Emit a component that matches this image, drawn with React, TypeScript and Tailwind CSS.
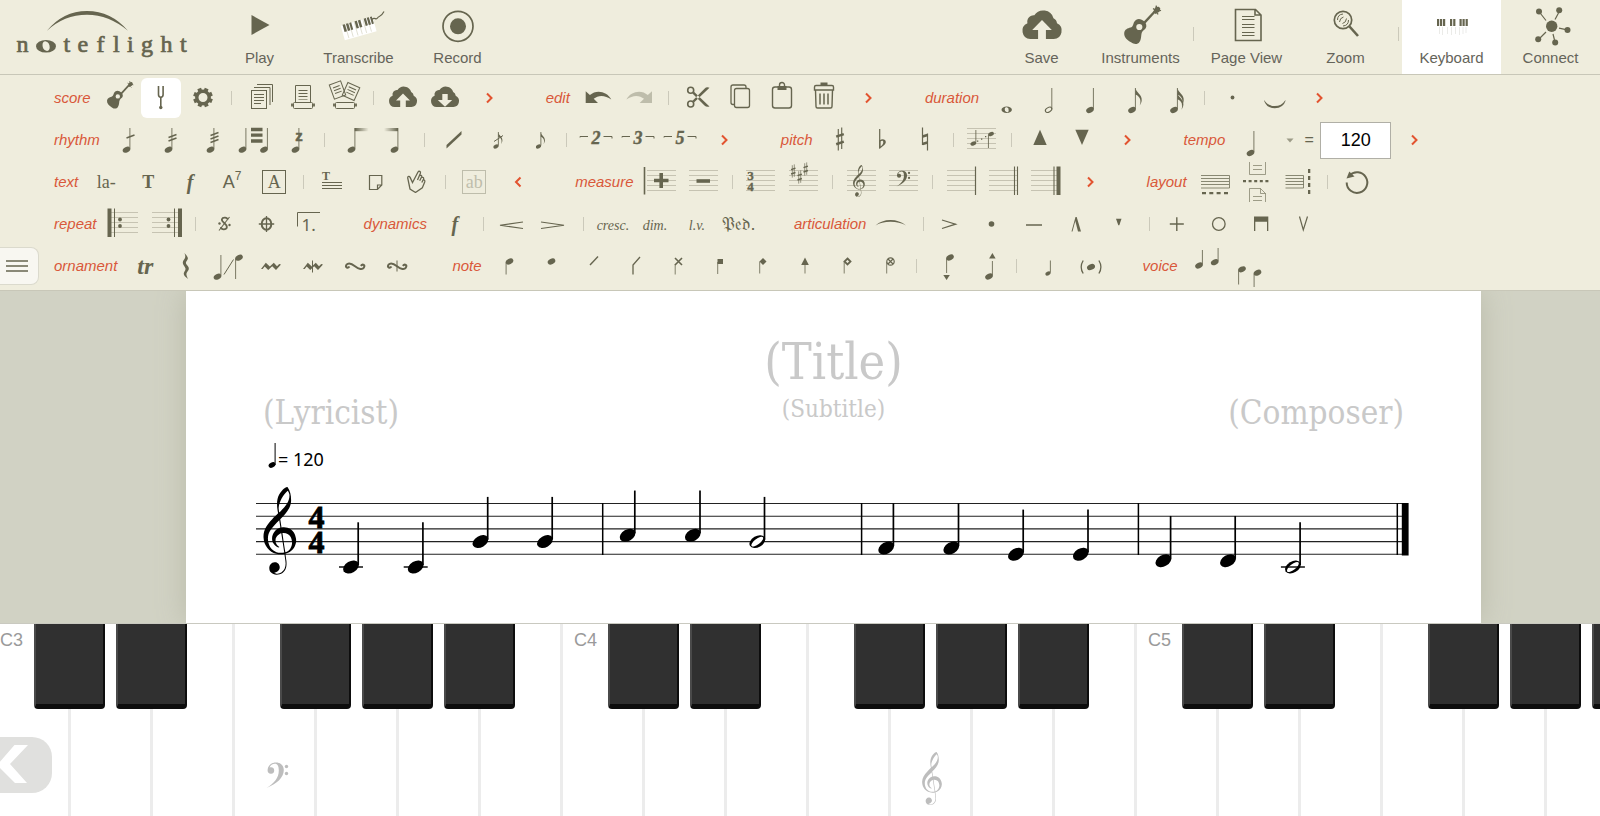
import type { ReactNode } from 'react'

type Tool = { name: string; icon: ReactNode; active?: boolean; disabled?: boolean }
type Item = Tool | 'sep'
type GroupData = { label: string; items: Item[]; more?: 'right' | 'left' }

const TREBLE =
  'm12.049 3.5296c0.305 3.1263-2.019 5.6563-4.0772 7.7014-0.9349 0.897-0.155 0.148-0.6437 0.594-0.1022-0.479-0.2986-1.731-0.2802-2.11 0.1304-2.6939 2.3198-6.5875 4.2381-8.0236 0.309 0.5767 0.563 0.6231 0.763 1.8382zm0.651 16.142c-1.232-0.906-2.85-1.144-4.3336-0.885-0.1913-1.255-0.3827-2.51-0.574-3.764 2.3506-2.329 4.9066-5.0322 5.0406-8.5394 0.059-2.232-0.276-4.6714-1.678-6.4836-1.7004 0.12823-2.8995 2.156-3.8019 3.4165-1.4889 2.6705-1.1414 5.9169-0.57 8.7965-0.8094 0.952-1.9296 1.743-2.7274 2.734-2.3561 2.308-4.4085 5.43-4.0046 8.878 0.18332 3.334 2.5894 6.434 5.8702 7.227 1.2457 0.315 2.5639 0.346 3.8241 0.099 0.2199 2.25 1.0266 4.629 0.0925 6.813-0.7007 1.598-2.7875 3.004-4.3325 2.192-0.5994-0.316-0.1137-0.051-0.478-0.252 1.0698-0.257 1.9996-1.036 2.26-1.565 0.8378-1.464-0.3998-3.639-2.1554-3.358-2.262 0.046-3.1904 3.14-1.7356 4.685 1.3468 1.52 3.833 1.312 5.4301 0.318 1.8125-1.18 2.0395-3.544 1.8325-5.562-0.07-0.678-0.403-2.67-0.444-3.387 0.697-0.249 0.209-0.059 1.193-0.449 2.66-1.053 4.357-4.259 3.594-7.122-0.318-1.469-1.044-2.914-2.302-3.792zm0.561 5.757c0.214 1.991-1.053 4.321-3.079 4.96-0.136-0.795-0.172-1.011-0.2626-1.475-0.4822-2.46-0.744-4.987-1.116-7.481 1.6246-0.168 3.4576 0.543 4.0226 2.184 0.244 0.577 0.343 1.197 0.435 1.812zm-5.1486 5.196c-2.5441 0.141-4.9995-1.595-5.6343-4.081-0.749-2.153-0.5283-4.63 0.8207-6.504 1.1151-1.702 2.6065-3.105 4.0286-4.543 0.183 1.127 0.366 2.254 0.549 3.382-2.9906 0.782-5.0046 4.725-3.215 7.451 0.5324 0.764 1.9765 2.223 2.7655 1.634-1.102-0.683-2.0033-1.859-1.8095-3.227-0.0821-1.282 1.3699-2.911 2.6513-3.198 0.4384 2.869 0.9413 6.073 1.3797 8.943-0.5054 0.1-1.0211 0.143-1.536 0.143z'
const BASS =
  'M1.6 8.6C1.6 3.6 5.2.4 10 .4c4.9 0 7.8 3.2 7.8 7.7C17.800 16 10.500 22 .6 26 8.200 21 12.800 16 12.800 8.400 12.800 4 11.600 1.700 8.900 1.700 6.600 1.700 4.200 3 3.600 5.600 6 4.800 8.200 6 8.200 8.300a3.300 3.300 0 0 1-6.600.3z'

const serif = '"Liberation Serif", "Times New Roman", serif'
const sans = '"Liberation Sans", Arial, sans-serif'

/* Drawing helpers. Every tool icon uses a 42 x 42 grid. */
function Ico({ children, box = '0 0 42 42' }: { children: ReactNode; box?: string }) {
  return (
    <svg viewBox={box} className="size-[42px] shrink-0 overflow-visible" fill="currentColor" aria-hidden="true">
      {children}
    </svg>
  )
}

function Lines({ d, w = 1, o = 1, cap }: { d: string; w?: number; o?: number; cap?: 'round' }) {
  return <path d={d} fill="none" stroke="currentColor" strokeWidth={w} opacity={o} strokeLinecap={cap} />
}

function Head({ x, y, r = 4 }: { x: number; y: number; r?: number }) {
  return <ellipse cx={x} cy={y} rx={r} ry={r * 0.68} transform={`rotate(-25 ${x} ${y})`} />
}

function Up({ x, y, top, r = 4 }: { x: number; y: number; top: number; r?: number }) {
  return (
    <>
      <Head x={x} y={y} r={r} />
      <Lines d={`M${x + r * 0.85} ${y - 1}V${top}`} o={0.85} />
    </>
  )
}

function Down({ x, y, bottom, r = 4 }: { x: number; y: number; bottom: number; r?: number }) {
  return (
    <>
      <Head x={x} y={y} r={r} />
      <Lines d={`M${x - r * 0.85} ${y + 1}V${bottom}`} o={0.85} />
    </>
  )
}

function Staff({ x1 = 7, x2 = 36 }: { x1?: number; x2?: number }) {
  return <Lines d={[9.5, 14.5, 19.5, 24.5, 29.5].map((y) => `M${x1} ${y}H${x2}`).join('')} o={0.3} />
}

function Sharp({ x, y, s = 1 }: { x: number; y: number; s?: number }) {
  return (
    <g transform={`translate(${x} ${y}) scale(${s})`}>
      <Lines d="M-1.800-10.500V12M1.800-12V10.500" w={1.2} />
      <Lines d="M-4-2.500L4-5.200M-4 5.500L4 2.800" w={2.6} />
    </g>
  )
}

function Guitar() {
  return (
    <>
      <path
        fillRule="evenodd"
        d="M9 23.800c.3-2.700 2.500-3.500 4.500-4 2-.6 1.800-2.500 2.600-4 1.300-2.200 3.600-2.600 5.400-1.500 2.200 1.200 3.600 2.800 3.300 4.800-.3 1.900-2 2.400-2.900 3.700-1.200 1.800-.2 4.800-2 7.300-1.300 1.900-3.700 2-6 .3-2.800-1.500-5.100-3.600-4.900-6.600zM17.600 19.400a2.200 2.200 0 1 0 4.400 0 2.200 2.200 0 1 0-4.400 0z"
      />
      <Lines d="M23 16.800L31 8.200" w={1.7} />
      <path d="M29.800 8.600l1.400-3.200 2.600-.4 1 1.200-.6 2.400-3 1.500z" />
      <Lines d="M29.600 6.200l1.400 1M31.600 4.200l.8 1.400M35.300 7.800l-1.400-.5M33.300 10.400l-1-1" w={0.9} />
    </>
  )
}

const CLOUD =
  'M12.600 30a5.900 5.900 0 0 1-2-11.300 4.500 4.500 0 0 1 4.900-5.600 7.600 7.600 0 0 1 13.700 2 4.400 4.400 0 0 1 2.500 3.700A5.900 5.900 0 0 1 29.400 30z'

function Roller() {
  return (
    <>
      <rect x="11.500" y="25.500" width="19" height="6" rx="1" fill="none" stroke="currentColor" />
      <Lines d="M10 26.500v3M32 26.500v3" w={1.8} />
    </>
  )
}

function Flag({ x, y, s = 1 }: { x: number; y: number; s?: number }) {
  return (
    <path
      transform={`translate(${x} ${y}) scale(${s})`}
      d="M0 0c.6 4.500 6.800 6.500 6.300 12.200-.1 2-1 3.800-2 5.300C6 13 5 8.500 0 6.500z"
    />
  )
}

function Tuplet({ n }: { n: string }) {
  return (
    <Ico>
      <Lines d="M5 18.500v-1h8M28.500 17.500H37v2" />
      <text x="21" y="24.500" textAnchor="middle" fontFamily={serif} fontSize="18" fontWeight="700" fontStyle="italic" stroke="currentColor" strokeWidth=".4">
        {n}
      </text>
    </Ico>
  )
}

const word = (text: string, cls: string) => <span className={cls}>{text}</span>
const SERIF = 'font-[Liberation_Serif,serif]'

const groups: GroupData[][] = [
  [
    {
      label: 'score',
      more: 'right',
      items: [
        { name: 'Instruments', icon: <Ico><Guitar /></Ico> },
        {
          name: 'Concert pitch',
          active: true,
          icon: (
            <Ico>
              <Lines d="M18.500 9v8.500q0 2.500 2.300 2.800 2.300-.3 2.300-2.800V9" w={1.6} />
              <Lines d="M20.800 20v9" w={1.6} />
              <circle cx="20.800" cy="30.500" r="1.700" />
            </Ico>
          ),
        },
        {
          name: 'Settings',
          icon: (
            <Ico>
              <circle cx="21" cy="20.500" r="6.200" fill="none" stroke="currentColor" strokeWidth="3.400" />
              {[0, 45, 90, 135, 180, 225, 270, 315].map((a) => (
                <rect key={a} x="19" y="10.700" width="4" height="3.500" transform={`rotate(${a + 22} 21 20.500)`} />
              ))}
            </Ico>
          ),
        },
        'sep',
        {
          name: 'Parts',
          icon: (
            <Ico>
              <rect x="11.500" y="13.500" width="15" height="18" fill="none" stroke="currentColor" />
              <Lines d="M14 17.500h10M14 20.500h10M14 23.500h10M14 26.500h7" />
              <Lines d="M14 10.500h16v17.500M17 7.500h15.500V25" />
            </Ico>
          ),
        },
        {
          name: 'Print score',
          icon: (
            <Ico>
              <Lines d="M13.500 25V8.500h15V25M16.500 13.500h9M16.500 16.500h9M16.500 19.500h9" />
              <Lines d="M16.500 22.500h9" o={0.6} />
              <Roller />
            </Ico>
          ),
        },
        {
          name: 'Print parts',
          icon: (
            <Ico>
              <g transform="rotate(-20 13.500 13)">
                <Lines d="M7.500 5.500h12v15h-12zM10 9.500h7M10 12.500h7M10 15.500h7" />
              </g>
              <g transform="rotate(24 27 14.500)">
                <Lines d="M20.500 7.500h13v14h-13zM23 11h8M23 14h8M23 17h8" />
              </g>
              <Roller />
            </Ico>
          ),
        },
        'sep',
        {
          name: 'Export',
          icon: <Ico><path fillRule="evenodd" d={CLOUD + 'M21 16.500l-7 7h4.200V30h5.600v-6.500H28z'} /></Ico>,
        },
        {
          name: 'Import',
          icon: <Ico><path fillRule="evenodd" d={CLOUD + 'M18.300 17h5.400v6h4.500L21 29.700 13.800 23h4.500z'} /></Ico>,
        },
      ],
    },
    {
      label: 'edit',
      more: 'right',
      items: [
        {
          name: 'Undo',
          icon: <Ico><path d="M8.700 14.300V26H21l-4.300-4.200c4.500-4 11.300-4 17.600.7-4.300-8.200-15-10.300-21.400-4.400z" /></Ico>,
        },
        {
          name: 'Redo',
          disabled: true,
          icon: <Ico><path d="M33 14.300V26H20.700l4.300-4.200c-4.500-4-11.300-4-17.600.7 4.300-8.200 15-10.300 21.400-4.400z" /></Ico>,
        },
        'sep',
        {
          name: 'Cut',
          icon: (
            <Ico>
              <circle cx="13.700" cy="13.300" r="3" fill="none" stroke="currentColor" strokeWidth="1.600" />
              <circle cx="13.700" cy="27" r="3" fill="none" stroke="currentColor" strokeWidth="1.600" />
              <path d="M15.500 16.500l1.500-1.800L32.500 29.500q-3 1-5-1zM15.500 23.800l1.500 1.800L32.500 10.700q-3-1-5 1z" />
            </Ico>
          ),
        },
        {
          name: 'Copy',
          icon: (
            <Ico>
              <rect x="15.500" y="11.500" width="15" height="19" rx="2" fill="none" stroke="currentColor" strokeWidth="1.300" />
              <Lines d="M15 27.500h-1q-2 0-2-2V10q0-2 2-2h11q2 0 2 2v1" w={1.3} />
            </Ico>
          ),
        },
        {
          name: 'Paste',
          icon: (
            <Ico>
              <rect x="11.500" y="10" width="19" height="21" rx="2.500" fill="none" stroke="currentColor" strokeWidth="1.400" />
              <rect x="16.500" y="9" width="9" height="4" />
              <Lines d="M18.500 9.500V8a2.500 2.500 0 0 1 5 0v1.500" w={1.4} />
            </Ico>
          ),
        },
        {
          name: 'Delete',
          icon: (
            <Ico>
              <rect x="17.500" y="5.500" width="7" height="2.500" />
              <Lines d="M11.500 13V10q0-1.500 1.500-1.500h16q1.500 0 1.500 1.500v3zM12.500 13l.5 16.500q0 1.500 1.500 1.500h13q1.500 0 1.500-1.500l.5-16.500" w={1.4} />
              <Lines d="M17 16.500v11M21 16.500v11M25 16.500v11" w={1.5} />
            </Ico>
          ),
        },
      ],
    },
    {
      label: 'duration',
      more: 'right',
      items: [
        {
          name: 'Whole note',
          icon: <Ico><path fillRule="evenodd" d="M15.500 32.700a5.200 3.200 0 1 0 10.400 0 5.200 3.200 0 1 0-10.400 0zM18.700 32a1.800 2.400-20 1 0 4 1.400 1.800 2.400-20 1 0-4-1.400z" /></Ico>,
        },
        {
          name: 'Half note',
          icon: (
            <Ico>
              <ellipse cx="20.600" cy="32.800" rx="3.500" ry="2.200" fill="none" stroke="currentColor" strokeWidth="1.100" transform="rotate(-30 20.600 32.800)" />
              <Lines d="M23.800 32V11" o={0.85} />
            </Ico>
          ),
        },
        { name: 'Quarter note', icon: <Ico><Up x={20} y={33} top={11} /></Ico> },
        { name: 'Eighth note', icon: <Ico><Up x={20} y={33} top={11} /><Flag x={23.400} y={11} /></Ico> },
        {
          name: 'Sixteenth note',
          icon: <Ico><Up x={20} y={33} top={11} /><Flag x={23.400} y={11} /><Flag x={23.400} y={16} s={0.95} /></Ico>,
        },
        'sep',
        { name: 'Dot', icon: <Ico><circle cx="20.500" cy="20.500" r="1.900" /></Ico> },
        { name: 'Tie', icon: <Ico><path d="M10.500 23.500q3.500 5.500 10.300 5.500t10.300-5.500h.6q-2.500 7.700-10.900 7.700T10 23.500z" /></Ico> },
      ],
    },
  ],
  [
    {
      label: 'rhythm',
      more: 'right',
      items: [
        { name: 'Tremolo 1', icon: <Ico><Up x={19.500} y={30.700} top={9} /><Lines d="M19.500 19l8-3" w={1.4} /></Ico> },
        { name: 'Tremolo 2', icon: <Ico><Up x={19.500} y={30.700} top={9} /><Lines d="M19.500 18.500l8-3M19.500 22l8-3" w={1.4} /></Ico> },
        { name: 'Tremolo 3', icon: <Ico><Up x={19.500} y={30.700} top={9} /><Lines d="M19.500 16.500l8-3M19.500 20l8-3M19.500 23.500l8-3" w={1.4} /></Ico> },
        {
          name: 'Two note tremolo',
          icon: <Ico><Up x={9.500} y={30.700} top={9} /><Up x={31} y={30.700} top={9} /><Lines d="M18 10.500h11.500M18 16.200h11.500M18 22h11.500" w={3.3} /></Ico>,
        },
        {
          name: 'Buzz roll',
          icon: (
            <Ico>
              <Up x={20.500} y={30.700} top={9} />
              <text x="24" y="22" textAnchor="middle" fontFamily={sans} fontSize="15" fontWeight="700" stroke="currentColor" strokeWidth=".5">z</text>
            </Ico>
          ),
        },
        'sep',
        {
          name: 'Beam right',
          icon: (
            <Ico>
              <linearGradient id="beamR"><stop offset="0" stopColor="#66654f" /><stop offset="1" stopColor="#66654f" stopOpacity="0" /></linearGradient>
              <Up x={18.500} y={30.700} top={9} />
              <rect x="21.700" y="9" width="14" height="3.200" fill="url(#beamR)" />
            </Ico>
          ),
        },
        {
          name: 'Beam left',
          icon: (
            <Ico>
              <linearGradient id="beamL"><stop offset="0" stopColor="#66654f" stopOpacity="0" /><stop offset="1" stopColor="#66654f" /></linearGradient>
              <Up x={19.500} y={30.700} top={9} />
              <rect x="9" y="9" width="14" height="3.200" fill="url(#beamL)" />
            </Ico>
          ),
        },
        'sep',
        { name: 'Slash', icon: <Ico><path d="M13.500 26L28.500 12v3.500L13.500 29.500z" /></Ico> },
        {
          name: 'Acciaccatura',
          icon: <Ico><Up x={21} y={27.500} top={13} r={2.8} /><Flag x={23.300} y={13.500} s={0.65} /><Lines d="M19 22.500l9-6" /></Ico>,
        },
        { name: 'Appoggiatura', icon: <Ico><Up x={21.500} y={27.500} top={13} r={2.8} /><Flag x={23.800} y={13.500} s={0.65} /></Ico> },
        'sep',
        { name: 'Duplet', icon: <Tuplet n="2" /> },
        { name: 'Triplet', icon: <Tuplet n="3" /> },
        { name: 'Quintuplet', icon: <Tuplet n="5" /> },
      ],
    },
    {
      label: 'pitch',
      more: 'right',
      items: [
        { name: 'Sharp', icon: <Ico><Sharp x={20} y={20} s={0.95} /></Ico> },
        {
          name: 'Flat',
          icon: <Ico><Lines d="M17.700 10v19.500" w={1.2} /><path d="M17.300 29.800V21.500c3-2 6.500-1.300 6.500 1.500 0 2.600-3.500 4.600-6.500 6.800zM18.500 27.500c1.800-1.300 2.800-2.800 2.800-4.300 0-1.800-1.600-1.900-2.800-.8z" fillRule="evenodd" /></Ico>,
        },
        { name: 'Natural', icon: <Ico><Lines d="M18.500 8.500V26M23.500 14.500v17" w={1.2} /><Lines d="M18.500 17.500l5-1.500M18.500 25l5-1.500" w={2.6} /></Ico> },
        'sep',
        {
          name: 'Transpose',
          icon: <Ico><Staff x1={5} x2={34} /><Up x={11.300} y={24.500} top={11} r={3} /><Down x={29} y={15} bottom={29} r={3} /><path d="M15 21.500h1.300v1.300H15zM19 19.500h1.300v1.300H19zM23 17h1.300v1.300H23z" /></Ico>,
        },
        'sep',
        { name: 'Pitch up', icon: <Ico><path d="M20 10.700L26.700 26H13.300z" /></Ico> },
        { name: 'Pitch down', icon: <Ico><path d="M20 26l6.700-15.300H13.300z" /></Ico> },
      ],
    },
  ],
  [
    {
      label: 'text',
      more: 'left',
      items: [
        { name: 'Lyrics', icon: word('la-', `${SERIF} text-lg`) },
        { name: 'Text', icon: word('T', `${SERIF} text-lg font-bold`) },
        { name: 'Dynamic text', icon: word('f', `${SERIF} text-xl font-bold italic`) },
        {
          name: 'Chord symbol',
          icon: <span className="flex text-lg">A<sup className="-top-1 text-xs leading-6">7</sup></span>,
        },
        { name: 'Rehearsal mark', icon: word('A', `${SERIF} flex size-6 items-center justify-center border border-current text-lg leading-none`) },
        'sep',
        {
          name: 'Staff text',
          icon: (
            <Ico>
              <text x="11" y="19" fontFamily={serif} fontSize="12" fontWeight="700">T</text>
              <Lines d="M11 21.500h20M11 24.500h20M11 27.500h20" />
            </Ico>
          ),
        },
        { name: 'Comment', icon: <Ico><Lines d="M16.500 14.500h12.300v9.500l-4.300 4.500h-8zM28.500 24h-4v4.500" w={1.2} /></Ico> },
        {
          name: 'Fingering',
          icon: (
            <Ico>
              <Lines
                d="M20.500 31.500l-5.500-3.500-2.300-11c-.2-1.800 1.800-2.200 2.400-.6l2.400 5.100L23 11c.9-1.400 3-.5 2.400 1.200L22.500 19M24.500 14.800c1-1.200 2.600-.3 2.200 1l-2 4M26.700 16.500c1.200-.6 2.300.3 1.900 1.600l-1.800 3.400M28.500 19c1.200-.2 1.600.8 1.200 1.900l-2.400 6-6.800 4.600"
                w={1.3}
              />
            </Ico>
          ),
        },
        'sep',
        { name: 'Edit text', disabled: true, icon: word('ab', `${SERIF} flex size-6 items-center justify-center border border-current text-lg leading-none`) },
      ],
    },
    {
      label: 'measure',
      more: 'right',
      items: [
        { name: 'Add measure', icon: <Ico><Staff x1={6} x2={35} /><Lines d="M3.500 6v27.500" w={1.6} /><Lines d="M13 19.500h14.500M20.200 12v15" w={3.6} /></Ico> },
        { name: 'Remove measure', icon: <Ico><Staff x1={6} x2={35} /><Lines d="M13.500 20H27" w={3.6} /></Ico> },
        'sep',
        {
          name: 'Time signature',
          icon: (
            <Ico>
              <Staff x1={5} x2={34} />
              <g fontFamily={serif} fontSize="13" fontWeight="700" textAnchor="middle" stroke="currentColor" strokeWidth=".3">
                <text x="9.500" y="18.500">3</text>
                <text x="9.500" y="29.500">4</text>
              </g>
            </Ico>
          ),
        },
        { name: 'Key signature', icon: <Ico><Staff x1={6} x2={35} /><Sharp x={10.300} y={10} s={0.55} /><Sharp x={16.700} y={16} s={0.55} /><Sharp x={22.700} y={8} s={0.55} /></Ico> },
        'sep',
        { name: 'Treble clef', icon: <Ico><Staff x1={6} x2={35} /><path d={TREBLE} transform="translate(12 4) scale(.78)" /></Ico> },
        {
          name: 'Bass clef',
          icon: <Ico><Staff x1={6} x2={35} /><g transform="translate(13 9.500) scale(.62)"><path d={BASS} /><circle cx="21" cy="4" r="1.800" /><circle cx="21" cy="12" r="1.800" /></g></Ico>,
        },
        'sep',
        { name: 'Barline', icon: <Ico><Staff x1={6} x2={35} /><Lines d="M34.500 5.500V34" w={1.2} /></Ico> },
        { name: 'Double barline', icon: <Ico><Staff x1={6} x2={35} /><Lines d="M31.500 5.500V34M34.500 5.500V34" w={1.1} /></Ico> },
        { name: 'Final barline', icon: <Ico><Staff x1={6} x2={35} /><Lines d="M29 5.500V34" w={1.1} /><Lines d="M33.500 5.500V34" w={4} /></Ico> },
      ],
    },
    {
      label: 'layout',
      items: [
        {
          name: 'System break',
          icon: <Ico><Lines d="M7 14.500h28.500v12.500M7 17.500h28M7 20.500h28M7 23.500h28M7 27h28.500" o={0.75} /><path d="M8 31h4v2.300H8zM15.300 31h4v2.300h-4zM22.600 31h4v2.300h-4zM30 31h4v2.300h-4z" /></Ico>,
        },
        {
          name: 'Page break',
          icon: (
            <Ico>
              <Lines d="M13.500 1v12.500h16V1M17 4.500h9M17 8.500h9M13.500 41V27.500h11l5 5V41M24.500 27.500v5h5M17 35.500h9M17 39.500h9" o={0.6} />
              <path d="M7 19h3v2.200H7zM12.600 19h3v2.200h-3zM18.200 19h3v2.200h-3zM23.800 19h3v2.200h-3zM29.400 19h3v2.200h-3z" />
            </Ico>
          ),
        },
        {
          name: 'Measure break',
          icon: <Ico><Lines d="M7.500 14.500h18v12.500M7.500 17.500h18M7.500 20.500h18M7.500 23.500h18M7.500 27h18" o={0.75} /><path d="M30 8h2.300v4H30zM30 15h2.300v4H30zM30 22h2.300v4H30zM30 29h2.300v4H30z" /></Ico>,
        },
        'sep',
        { name: 'Reset layout', icon: <Ico><Lines d="M13.500 14.500A10.300 10.300 0 1 1 10.700 21.500" w={2} /><path d="M10.500 17.500l2.800-7 5.200 5z" /></Ico> },
      ],
    },
  ],
  [
    {
      label: 'repeat',
      items: [
        {
          name: 'Start repeat',
          icon: <Ico><Staff x1={6} x2={34} /><Lines d="M5.500 5.500V34" w={4} /><Lines d="M10.500 5.500V34" /><circle cx="16" cy="16.500" r="1.900" /><circle cx="16" cy="23" r="1.900" /></Ico>,
        },
        {
          name: 'End repeat',
          icon: <Ico><Staff x1={6} x2={35} /><Lines d="M34 5.500V34" w={4} /><Lines d="M28.500 5.500V34" /><circle cx="22.500" cy="16.500" r="1.900" /><circle cx="22.500" cy="23" r="1.900" /></Ico>,
        },
        'sep',
        {
          name: 'Segno',
          icon: <Ico><Lines d="M23.500 16.500c.3-2.200-4.800-2.800-5.600-.3-.7 2.800 5 4.500 5 7.700 0 3.300-6.300 3-5.900.1" w={1.8} /><Lines d="M15 27.500L25.500 14" w={1.1} /><circle cx="15.500" cy="20.500" r="1.200" /><circle cx="25.500" cy="22" r="1.200" /></Ico>,
        },
        {
          name: 'Coda',
          icon: <Ico><ellipse cx="20.500" cy="21" rx="4.800" ry="5.800" fill="none" stroke="currentColor" strokeWidth="2" /><Lines d="M20.500 13v16M12.800 21h15.400" w={1.3} /></Ico>,
        },
        {
          name: 'Ending',
          icon: (
            <Ico>
              <Lines d="M9.500 23.500v-14H32" />
              <text x="13.500" y="27.500" fontFamily='"Noto Sans", sans-serif' fontSize="17">1.</text>
            </Ico>
          ),
        },
      ],
    },
    {
      label: 'dynamics',
      items: [
        { name: 'Forte', icon: word('f', `${SERIF} text-xl font-bold italic`) },
        'sep',
        { name: 'Crescendo', icon: <Ico><Lines d="M31 19L8 22.300 31 25.500" w={1.1} /></Ico> },
        { name: 'Decrescendo', icon: <Ico><Lines d="M7 19L30 22.300 7 25.500" w={1.1} /></Ico> },
        'sep',
        { name: 'Crescendo text', icon: word('cresc.', `${SERIF} mt-1 text-sm italic`) },
        { name: 'Diminuendo text', icon: word('dim.', `${SERIF} mt-1 text-sm italic`) },
        { name: 'Laissez vibrer', icon: word('l.v.', `${SERIF} mt-1 text-sm italic`) },
        { name: 'Pedal', icon: word('𝔓𝔢𝔡.', 'text-lg') },
      ],
    },
    {
      label: 'articulation',
      items: [
        { name: 'Slur', icon: <Ico><path d="M2.500 22.500q6-5.500 15-5.500T33 22.500Q26.500 18.800 17.500 18.800t-15 3.700z" /></Ico> },
        'sep',
        { name: 'Accent', icon: <Ico><Lines d="M11 17l13.500 4.200L11 25.500" w={1.3} /></Ico> },
        { name: 'Staccato', icon: <Ico><circle cx="18.500" cy="21" r="2.800" /></Ico> },
        { name: 'Tenuto', icon: <Ico><Lines d="M11 22h16" w={1.5} /></Ico> },
        { name: 'Marcato', icon: <Ico><path d="M14.500 28.500l4-14.500h1.200L24 28.500h-3L18.300 18l-2.800 10.500z" /></Ico> },
        { name: 'Staccatissimo', icon: <Ico><path d="M17 15.700h5.500L20.300 22.300h-1z" /></Ico> },
        'sep',
        { name: 'Left hand pizzicato', icon: <Ico><Lines d="M12.800 21h14M19.800 14.200V28" w={1.4} /></Ico> },
        { name: 'Open', icon: <Ico><circle cx="19.800" cy="21" r="6.300" fill="none" stroke="currentColor" strokeWidth="1.300" /></Ico> },
        { name: 'Down bow', icon: <Ico><path d="M13 13.500h14.300V28H26v-9.300H14.300V28H13z" /></Ico> },
        { name: 'Up bow', icon: <Ico><Lines d="M16.500 13.500L20.300 27 24.500 13.500" w={1.2} /></Ico> },
      ],
    },
  ],
  [
    {
      label: 'ornament',
      items: [
        { name: 'Trill', icon: word('tr', `${SERIF} text-2xl font-bold italic`) },
        {
          name: 'Arpeggio',
          icon: <Ico><path d="M18.500 8c3 3.500 4.500 5 2.500 7.500-1.800 2.200-1.300 3 .8 5.500 1.800 2.200 1 4-.6 6-1.300 1.600-1 3.500 1 7-4-2.500-5.500-4.500-3.700-7.500 1.300-2.200 1.500-3-.3-5.500-1.800-2.700-1.900-4.300-.1-6.500 1.600-2.300 1.400-3.500.4-6.500z" /></Ico>,
        },
        { name: 'Glissando', icon: <Ico><Up x={9.500} y={31.700} top={10} /><Lines d="M16 29.500l9.500-15" /><Down x={31} y={12.700} bottom={34} /></Ico> },
        { name: 'Trill short', icon: <Ico><path d="M11 24l4.800-6.200 4 3.700 4-3.700 3.200 3.400 2.200-2.200 1.800.5-5 5.500-3.800-3.700-4 3.700-3.500-3.400-2 2.400z" /></Ico> },
        { name: 'Mordent', icon: <Ico><path d="M11 24l4.800-6.200 4 3.700 4-3.700 3.200 3.400 2.200-2.200 1.800.5-5 5.500-3.800-3.700-4 3.700-3.500-3.400-2 2.400z" /><Lines d="M20.500 15.500v12" /></Ico> },
        { name: 'Turn', icon: <Ico><Lines d="M15.500 21.500c-2 2.500-4.500.5-3-1.800 1.500-1.700 4.500-1.700 8.500 1.500s7.500 3.600 8.800 1.500c1.600-2.500-1-4.300-3-1.800" w={2} /></Ico> },
        { name: 'Inverted turn', icon: <Ico><Lines d="M15.500 21.500c-2 2.500-4.500.5-3-1.800 1.500-1.700 4.500-1.700 8.500 1.500s7.500 3.600 8.800 1.500c1.600-2.500-1-4.300-3-1.800" w={2} /><Lines d="M21 15.500v11" /></Ico> },
      ],
    },
    {
      label: 'note',
      items: [
        { name: 'Normal head', icon: <Ico><Down x={20.500} y={16.500} bottom={29.500} /></Ico> },
        { name: 'Stemless', icon: <Ico><Head x={20.500} y={16.500} /></Ico> },
        { name: 'Slash stemless', icon: <Ico><Lines d="M17 20l8-8.500" w={1.4} /></Ico> },
        { name: 'Slash head', icon: <Ico><Lines d="M18 29.500v-9.500l7-8" w={1.3} /></Ico> },
        { name: 'X head', icon: <Ico><Lines d="M18 13l7 7M25 13l-7 7" w={1.6} /><Lines d="M18.200 19v10.500" o={0.8} /></Ico> },
        { name: 'Square head', icon: <Ico><path d="M18.500 14h5.500v5h-5.500z" /><Lines d="M18.700 17v12" o={0.8} /></Ico> },
        { name: 'Diamond head', icon: <Ico><path d="M22 13l3.500 3.500-3.500 3.500-3.500-3.500z" /><Lines d="M18.700 16.500v12" o={0.8} /></Ico> },
        { name: 'Triangle head', icon: <Ico><path d="M22 12.500l3.800 7.500h-7.600z" /><Lines d="M22 19v9.500" o={0.8} /></Ico> },
        { name: 'Open diamond head', icon: <Ico><Lines d="M22.500 13.500l3 3-3 3-3-3z" w={1.8} /><Lines d="M19.200 16.500v12" o={0.8} /></Ico> },
        {
          name: 'Circled X head',
          icon: <Ico><circle cx="23.500" cy="16.500" r="3.700" fill="none" stroke="currentColor" strokeWidth="1.200" /><Lines d="M21 14l5 5M26 14l-5 5" w={1.2} /><Lines d="M19.700 17v11.500" o={0.8} /></Ico>,
        },
        'sep',
        { name: 'Octave down', icon: <Ico><Down x={25} y={12.500} bottom={28} /><path d="M18.300 30h6.500l-3.200 5z" /></Ico> },
        { name: 'Octave up', icon: <Ico><Up x={22} y={31.500} top={16} /><path d="M22.100 13.500h6.500l-3.200-5.500z" /></Ico> },
        'sep',
        { name: 'Cue size', icon: <Ico><Up x={23} y={28.500} top={15.500} r={2.8} /></Ico> },
        { name: 'Parentheses', icon: <Ico><Head x={24} y={22} r={4.200} /><Lines d="M16.200 15.500q-4 6.500 0 13M31.900 15.500q4 6.500 0 13" w={1.3} /></Ico> },
      ],
    },
    {
      label: 'voice',
      items: [
        { name: 'Voice 1', icon: <Ico><Up x={14} y={20.500} top={5} /><Up x={29.700} y={17.200} top={3} /></Ico> },
        { name: 'Voice 2', icon: <Ico><Down x={15} y={24.300} bottom={39.500} /><Down x={30.500} y={27.700} bottom={42} /></Ico> },
      ],
    },
  ],
]

function Chevron({ left = false, label }: { left?: boolean; label: string }) {
  return (
    <button type="button" aria-label={label} className="flex w-[46px] items-center justify-center text-[#e2532f]">
      <svg viewBox="0 0 12 12" className="size-3" fill="none" stroke="currentColor" strokeWidth="2" aria-hidden="true">
        <path d={left ? 'M8.500 1.500L4 6l4.500 4.500' : 'M4 1.500L8.500 6 4 10.500'} />
      </svg>
    </button>
  )
}

function Divider() {
  return <span className="flex w-4 shrink-0 justify-center"><i className="h-3.5 w-px bg-[#cbc9ba]" /></span>
}

const groupLabel = 'mr-[7px] text-[15px] italic text-[#d9583a]'

function Group({ label, items, more }: GroupData) {
  return (
    <div className="flex h-full shrink-0 items-center" role="group" aria-label={label}>
      <span className={groupLabel}>{label}</span>
      {items.map((it, i) =>
        it === 'sep' ? (
          <Divider key={i} />
        ) : (
          <button
            key={it.name + i}
            type="button"
            aria-label={it.name}
            disabled={it.disabled}
            className={`mx-px flex size-10 shrink-0 items-center justify-center rounded-md ${it.active ? 'bg-white' : ''} ${it.disabled ? 'opacity-35' : ''}`}
          >
            {it.icon}
          </button>
        ),
      )}
      {more && <Chevron left={more === 'left'} label={more === 'left' ? `Fewer ${label} tools` : `More ${label} tools`} />}
    </div>
  )
}

function TempoGroup() {
  return (
    <div className="flex h-full shrink-0 items-center">
      <label htmlFor="tempo" className={groupLabel}>tempo</label>
      <button type="button" aria-label="Beat unit" className="flex w-[66px] items-center">
        <Ico><Up x={18.500} y={34} top={12} /></Ico>
        <svg viewBox="0 0 8 5" className="ml-3 h-[5px] w-2 opacity-60" fill="currentColor" aria-hidden="true"><path d="M.5.5h7L4 4.500z" /></svg>
      </button>
      <span className="w-[22px] text-center text-base">=</span>
      <input
        id="tempo"
        type="text"
        defaultValue="120"
        className="h-[37px] w-[71px] border border-[#b0afa6] bg-white text-center text-lg text-black outline-none"
      />
      <Chevron label="More tempo tools" />
    </div>
  )
}

function HeaderButton({ label, children, active = false }: { label: string; children: ReactNode; active?: boolean }) {
  return (
    <button type="button" className={`flex w-[99px] flex-col items-center pt-1 ${active ? 'bg-white' : ''}`}>
      {children}
      <span className="mt-0.5 text-[15px] leading-5 text-[#65645a]">{label}</span>
    </button>
  )
}

function HeaderDivider() {
  return <span className="mt-[27px] flex w-[7px] justify-center"><i className="h-3.5 w-px bg-[#cbc9ba]" /></span>
}

function Logo() {
  return (
    <a href="#home" aria-label="noteflight" className="w-[210px] shrink-0">
      <svg viewBox="0 0 210 74" className="h-[74px] w-full" fill="currentColor" aria-hidden="true">
        <path d="M46.700 31Q63 11 87 11t41 19.800Q109 15 87 14.800 64 14.800 46.700 31z" />
        <g fontFamily={serif} fontSize="24" stroke="currentColor" strokeWidth=".7">
          <text x="16.500" y="52">n</text>
          <text x="63.500 77.500 96.500 113 127 141 160.500 180" y="52">teflight</text>
        </g>
        <path fillRule="evenodd" d="M36 46.200a10 6.300 0 1 0 20 0 10 6.300 0 1 0-20 0zM42.500 45a3.300 4.900-20 1 0 7.200 2.200 3.300 4.900-20 1 0-7.200-2.200z" />
      </svg>
    </a>
  )
}

function Header() {
  return (
    <header className="flex h-[75px] shrink-0 justify-between border-b border-[#c8c7b8]">
      <div className="flex">
        <Logo />
        <HeaderButton label="Play">
          <Ico><path d="M12.500 11l18 10-18 10z" /></Ico>
        </HeaderButton>
        <HeaderButton label="Transcribe">
          <Ico>
            <g transform="rotate(-16 20.600 24)">
              <rect x="4" y="17" width="33" height="15" fill="#fff" />
              <path d="M8.500 17v14M13 17v14M18 17v14M22.500 17v14M27 17v14M32 17v14" stroke="#dddccd" strokeWidth=".8" />
              <path d="M6 16.500h2.500V24H6zM9.500 16.500H12V24H9.500zM13 16.500h2V24h-2zM18.500 16.500H21V24h-2.500zM22 16.500h2.500V24H22zM28 16.500h2.300V24H28zM31.200 16.500h2.300V24h-2.300zM34.500 16.500h2V24h-2z" />
            </g>
            <Lines d="M34 15.500c2.500-3 4 1 5.500-1.500s3 0 6.500-6.500" w={1.2} />
          </Ico>
        </HeaderButton>
        <HeaderButton label="Record">
          <Ico>
            <circle cx="21" cy="22.300" r="15" fill="none" stroke="currentColor" strokeWidth="1.700" />
            <circle cx="21" cy="22.300" r="8" />
          </Ico>
        </HeaderButton>
      </div>
      <div className="flex">
        <HeaderButton label="Save">
          <Ico box="6 5 30 30"><path fillRule="evenodd" d={CLOUD + 'M21 16.500l-7 7h4.200V30h5.600v-6.500H28z'} /></Ico>
        </HeaderButton>
        <HeaderButton label="Instruments">
          <Ico box="6 3 30 30"><Guitar /></Ico>
        </HeaderButton>
        <HeaderDivider />
        <HeaderButton label="Page View">
          <Ico>
            <Lines d="M9.500 5.500h20l5.500 5.500v25.500H9.500zM29 5.500V11h5.500" w={1.6} />
            <Lines d="M16 12.500h12.500M16 15.500h12.500M16 20.500h12.500M16 23.500h12.500M16 28.500h12.500M16 31.500h12.500" />
          </Ico>
        </HeaderButton>
        <HeaderButton label="Zoom">
          <Ico>
            <circle cx="18" cy="16" r="8.700" fill="none" stroke="currentColor" strokeWidth="1.700" />
            <Lines d="M12.500 16q0-5.500 5.500-6M14.500 18q.3-4 4-5M23.500 16q0 5.500-5.500 6M21.500 14.500q-.3 4-4 5" w={1} />
            <Lines d="M24.500 22.500L33 32" w={2.6} />
          </Ico>
        </HeaderButton>
        <HeaderDivider />
        <HeaderButton label="Keyboard" active>
          <Ico>
            <path d="M6 15h2.200v7H6zM9 15h2.200v7H9zM12 15h2.200v7H12zM19 15h2.200v7H19zM22.200 15h2.200v7h-2.200zM28.500 15h2.200v7h-2.200zM31.500 15h2.200v7h-2.200zM34.600 15h2.200v7h-2.200z" />
            <Lines d="M8.500 23v7M11.500 23v8M16.500 23v7M20.500 23v8M24.500 23v7M28.500 23v8M32 23v7M35 23v6" o={0.13} />
          </Ico>
        </HeaderButton>
        <HeaderButton label="Connect">
          <Ico>
            <circle cx="21.700" cy="22.300" r="5.700" />
            {[[9, 7.500], [29.200, 6.300], [37.500, 26], [25.200, 38.500], [8.200, 35.300]].map(([x, y]) => (
              <circle key={x} cx={x} cy={y} r="3" />
            ))}
            <Lines d="M10.500 9.500l5.500 7M28.500 9l-3.500 6.500M29 24.200l7 1.500M23 30l1.500 6M16 28l-6 6" w={1.2} />
          </Ico>
        </HeaderButton>
      </div>
    </header>
  )
}

function Toolbar() {
  return (
    <nav aria-label="Notation tools" className="shrink-0 border-b border-[#c8c7b8] pb-[3px] pt-0.5">
      {groups.map((row, i) => (
        <div key={i} className="flex h-[42px] items-center">
          {i === 4 ? (
            <button
              type="button"
              aria-label="Menu"
              className="mr-[15px] flex h-[38px] w-[39px] shrink-0 items-center rounded-r-lg border border-l-0 border-[#dbdacd] bg-[#f8f7f1] pl-1.5"
            >
              <svg viewBox="0 0 22 14" className="h-3.5 w-[22px]" stroke="currentColor" strokeWidth="1.600" aria-hidden="true">
                <path d="M0 2h22M0 7h22M0 12h22" />
              </svg>
            </button>
          ) : (
            <span className="w-[54px] shrink-0" />
          )}
          <div className="flex h-full gap-[34px]">
            {row.map((g) => (
              <Group key={g.label} {...g} />
            ))}
            {i === 1 && <TempoGroup />}
          </div>
        </div>
      ))}
    </nav>
  )
}

// step 0 is the bottom line of the staff
const notes = [
  { x: 165, step: -2 }, { x: 229.7, step: -2 }, { x: 294.5, step: 2 }, { x: 359, step: 2 },
  { x: 441.6, step: 3 }, { x: 506.8, step: 3 }, { x: 571.3, step: 2, half: true },
  { x: 700.2, step: 1 }, { x: 765.3, step: 1 }, { x: 830, step: 0 }, { x: 894.8, step: 0 },
  { x: 977.4, step: -1 }, { x: 1042, step: -1 }, { x: 1106.9, step: -2, half: true },
]
const staffLines = [24.5, 37.2, 49.9, 62.6, 75.3]

function Music() {
  return (
    <svg viewBox="0 0 1295 100" className="mt-2 w-full text-black" fill="currentColor" role="img" aria-label="Four measures of music">
      {staffLines.map((y) => (
        <line key={y} x1="70" x2="1222" y1={y} y2={y} stroke="#222" strokeWidth="1.100" />
      ))}
      <path d={TREBLE} transform="translate(77.500 8) scale(2.150)" />
      <g fontFamily={serif} fontSize="32" fontWeight="700" textAnchor="middle" stroke="currentColor" strokeWidth=".8">
        <text x="130.500" y="48.500">4</text>
        <text x="130.500" y="74">4</text>
      </g>
      {[416.7, 675.6, 952.4, 1211.3].map((x) => (
        <line key={x} x1={x} x2={x} y1="24" y2="76" stroke="currentColor" strokeWidth="1.500" />
      ))}
      <rect x="1215.800" y="24" width="6.800" height="52.500" />
      {notes.map((n) => {
        const y = 75.3 - n.step * 6.35
        return (
          <g key={n.x}>
            {n.half ? (
              <>
                <ellipse cx={n.x} cy={y} rx="8.500" ry="5.600" transform={`rotate(-30 ${n.x} ${y})`} />
                <ellipse cx={n.x} cy={y} rx="7.200" ry="2.800" fill="#fff" transform={`rotate(-38 ${n.x} ${y})`} />
              </>
            ) : (
              <ellipse cx={n.x} cy={y} rx="8.500" ry="5.700" transform={`rotate(-30 ${n.x} ${y})`} />
            )}
            <line x1={n.x + 7.2} x2={n.x + 7.2} y1={y - 2} y2={y - 44.7} stroke="currentColor" strokeWidth="1.700" />
            {n.step === -2 && <line x1={n.x - 12} x2={n.x + 12} y1={y} y2={y} stroke="currentColor" strokeWidth="1.400" />}
          </g>
        )
      })}
    </svg>
  )
}

function Score() {
  return (
    <main className="flex min-h-0 flex-1 overflow-hidden bg-[#d1d2c4] pl-[186px] pr-[119px]">
      <section className="flex-1 bg-white pt-10 shadow-[0_0_28px_#b9baa8]">
        <div className="flex items-end justify-between px-[77px] font-[DejaVu_Serif_Condensed,Georgia,serif] text-[#c9c9c9]">
          <p className="flex-1 text-[33px] leading-10">(Lyricist)</p>
          <div className="pb-2 text-center">
            <h1 className="text-[50px] leading-[62px]">(Title)</h1>
            <h2 className="text-2xl leading-8">(Subtitle)</h2>
          </div>
          <p className="flex-1 text-right text-[33px] leading-10">(Composer)</p>
        </div>
        <p className="mt-2.5 flex h-7 items-end pl-[82px] font-[Noto_Sans,sans-serif] text-lg leading-6 text-black">
          <svg viewBox="0 0 10 26" className="mb-0.5 h-[26px] w-2.5" fill="currentColor" aria-hidden="true">
            <ellipse cx="4" cy="22" rx="3.600" ry="2.500" transform="rotate(-25 4 22)" />
            <path d="M6.600 0h1v22h-1z" />
          </svg>
          <span>= 120</span>
        </p>
        <Music />
      </section>
    </main>
  )
}

const blackAfter = [0, 1, 3, 4, 5]

function Keyboard() {
  return (
    <section aria-label="Piano keyboard" className="relative h-[193px] shrink-0 overflow-hidden border-t border-[#c9c9c0] bg-white">
      <div className="-ml-[11px] flex h-full">
        {Array.from({ length: 28 }, (_, i) => (
          <div key={i} className="relative h-full w-[82px] shrink-0 border-r-[3px] border-[#ececec]">
            {i % 7 === 0 && i < 21 && <span className="block pl-[11px] pt-1 text-lg leading-6 text-[#9a9a9a]">{`C${3 + i / 7}`}</span>}
            {i === 3 && (
              <svg viewBox="0 0 23 27" className="absolute bottom-[27px] left-[31px] h-[27px] w-[23px] text-[#bdbdbd]" fill="currentColor" aria-hidden="true">
                <path d={BASS} /><circle cx="20.500" cy="4.500" r="1.700" /><circle cx="20.500" cy="11.500" r="1.700" />
              </svg>
            )}
            {i === 11 && (
              <svg viewBox="0 0 15.200 40.800" className="absolute bottom-[11px] left-[31px] h-[53px] w-5 text-[#bdbdbd]" fill="currentColor" aria-hidden="true">
                <path d={TREBLE} />
              </svg>
            )}
            {blackAfter.includes(i % 7) && (
              <span className="absolute -right-[37px] top-0 z-10 h-[85px] w-[71px] rounded-b border-b-[5px] border-l-2 border-r-2 border-b-[#0d0d0d] border-l-[#4a4a4a] border-r-[#0d0d0d] bg-[#303030]" />
            )}
          </div>
        ))}
      </div>
      <button type="button" aria-label="Scroll keyboard left" className="absolute bottom-[23px] left-0 z-20 h-14 w-[52px] rounded-r-[20px] bg-[#e0e0de]">
        <svg viewBox="0 0 52 56" className="h-14 w-[52px]" fill="#fff" aria-hidden="true">
          <path d="M-2 27L14.500 8H28L10 27l17 19H15L-2 29z" />
        </svg>
      </button>
    </section>
  )
}

export default function App() {
  return (
    <div className="flex h-screen min-h-[640px] flex-col overflow-hidden bg-[#efeddd] font-[Liberation_Sans,Arial,sans-serif] text-[#66654f]">
      <Header />
      <Toolbar />
      <Score />
      <Keyboard />
    </div>
  )
}
